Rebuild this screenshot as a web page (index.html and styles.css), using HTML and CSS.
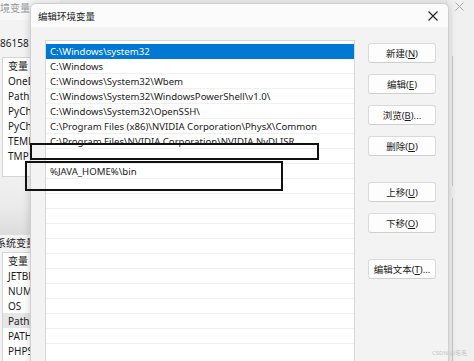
FILE: index.html
```html
<!DOCTYPE html>
<html lang="zh-CN">
<head>
  <meta charset="UTF-8">
  <title>编辑环境变量</title>
  <link rel="stylesheet" href="styles.css">
</head>
<body>
  <div class="desk">
    <!-- window behind the dialog -->
    <div class="bgwin">
      <div class="bg-title">环境变量</div>
      <div class="bg-user">86158 的用户变量</div>
      <div class="bg-list">
        <div class="bg-row head">变量</div>
        <div class="bg-row">OneDrive</div>
        <div class="bg-row">Path</div>
        <div class="bg-row">PyCharm</div>
        <div class="bg-row">PyCharm</div>
        <div class="bg-row">TEMP</div>
        <div class="bg-row">TMP</div>
      </div>
      <div class="bg-shade"></div>
      <div class="bg-sys">系统变量</div>
      <div class="bg-list bg-list-sys">
        <div class="bg-row head">变量</div>
        <div class="bg-row">JETBRAINS</div>
        <div class="bg-row">NUMBER</div>
        <div class="bg-row">OS</div>
        <div class="bg-row sel">Path</div>
        <div class="bg-row">PATHEXT</div>
        <div class="bg-row">PHPSTORM</div>
      </div>
    </div>

    <div class="bg-right">
      <svg class="bg-close" width="9" height="9" viewBox="0 0 9 9"><path d="M0.5 0.5L8.5 8.5M8.5 0.5L0.5 8.5" stroke="#a8a8a8" stroke-width="1"/></svg>
    </div>

    <!-- the dialog -->
    <div class="dialog">
      <div class="titlebar">
        <span class="title">编辑环境变量</span>
        <svg class="close" width="10" height="10" viewBox="0 0 10 10"><path d="M0.5 0.5L9.5 9.5M9.5 0.5L0.5 9.5" stroke="#222" stroke-width="1.1"/></svg>
      </div>
      <div class="dlg-body">
        <div class="paths">
          <div class="row sel">C:\Windows\system32</div>
          <div class="row">C:\Windows</div>
          <div class="row">C:\Windows\System32\Wbem</div>
          <div class="row">C:\Windows\System32\WindowsPowerShell\v1.0\</div>
          <div class="row">C:\Windows\System32\OpenSSH\</div>
          <div class="row">C:\Program Files (x86)\NVIDIA Corporation\PhysX\Common</div>
          <div class="row">C:\Program Files\NVIDIA Corporation\NVIDIA NvDLISR</div>
          <div class="row">.</div>
          <div class="row">%JAVA_HOME%\bin</div>
          <div class="row"></div>
          <div class="row"></div>
          <div class="row"></div>
          <div class="row"></div>
          <div class="row"></div>
          <div class="row"></div>
          <div class="row"></div>
          <div class="row"></div>
          <div class="row"></div>
          <div class="row"></div>
          <div class="row"></div>
        </div>
        <div class="buttons">
          <div class="group">
            <button class="btn">新建(<u>N</u>)</button>
            <button class="btn">编辑(<u>E</u>)</button>
            <button class="btn">浏览(<u>B</u>)...</button>
            <button class="btn">删除(<u>D</u>)</button>
          </div>
          <div class="group">
            <button class="btn">上移(<u>U</u>)</button>
            <button class="btn">下移(<u>O</u>)</button>
          </div>
          <div class="group">
            <button class="btn">编辑文本(<u>T</u>)...</button>
          </div>
        </div>
      </div>
    </div>

    <!-- annotation boxes drawn over the screenshot -->
    <div class="mark mark-dot"></div>
    <div class="mark mark-java"></div>

    <div class="watermark">CSDN @毛毛</div>
  </div>
</body>
</html>
```

FILE: styles.css
```css
body {
  margin: 0;
  font-family: "Noto Sans", "Noto Sans CJK SC", sans-serif;
  font-size: 10px;
  color: #1a1a1a;
}

.desk {
  position: relative;
  width: 474px;
  height: 361px;
  overflow: hidden;
  background: #f0f0f0;
}

/* background window */
.bgwin {
  width: 60px;
  height: 361px;
  background: #f3f3f3;
  overflow: hidden;
}

.bg-title {
  height: 20px;
  line-height: 16px;
  margin-left: -10px;
  color: #9a9a9a;
  font-size: 10px;
  white-space: nowrap;
  background: #f8f8f8;
}

.bg-user {
  margin-top: 15px;
  height: 20px;
  line-height: 16px;
  font-size: 10px;
  white-space: nowrap;
}

.bg-list {
  margin-left: 2px;
  margin-top: 2px;
  height: 118px;
  background: #fff;
  border: 1px solid #d4d4d4;
  border-right: none;
}

.bg-row {
  height: 15px;
  line-height: 16px;
  padding-left: 5px;
  white-space: nowrap;
  font-size: 10px;
}

.bg-row.head {
  line-height: 17px;
}

.bg-row.sel {
  background: #e6e6e6;
}

.bg-shade {
  height: 58px;
  background: linear-gradient(#f0f0f0, #ebebeb 50%, #dcdcdc);
}

.bg-sys {
  height: 15px;
  line-height: 16px;
  margin-left: -4px;
  white-space: nowrap;
  font-size: 10px;
}

.bg-list-sys {
  margin-top: 2px;
  height: 120px;
  border-bottom: none;
}

.bg-right {
  position: absolute;
  left: 446px;
  top: 0;
  width: 28px;
  height: 361px;
  background: #f0f0f0;
  border-left: 1px solid #e4e4e4;
}

.bg-right::before {
  content: "";
  position: absolute;
  left: 5px;
  top: 56px;
  height: 130px;
  border-left: 1px solid #c6c6c6;
}

.bg-right::after {
  content: "";
  position: absolute;
  left: 5px;
  top: 198px;
  height: 163px;
  border-left: 1px solid #c6c6c6;
}

.bg-close {
  position: absolute;
  left: 8px;
  top: 2px;
}

/* dialog */
.dialog {
  position: absolute;
  left: 30px;
  top: 3px;
  width: 417px;
  height: 370px;
  background: #f3f3f3;
  border: 1px solid #cfcfcf;
  border-radius: 6px 6px 0 0;
  box-shadow: 0 0 8px rgba(0, 0, 0, 0.18);
  overflow: hidden;
}

.titlebar {
  height: 23px;
  display: flex;
  align-items: center;
  justify-content: space-between;
  padding: 0 10px 0 7px;
  background: #fbfbfb;
}

.title {
  font-size: 9.5px;
  color: #1a1a1a;
}

.close {
  margin-top: 1px;
}

.dlg-body {
  display: flex;
  gap: 13px;
  padding: 13px 0 0 14px;
}

.paths {
  width: 308px;
  height: 340px;
  background: #fff;
  border: 1px solid #d6d6d6;
  border-bottom: none;
  padding-top: 3px;
  overflow: hidden;
  font-size: 9.6px;
}

.row {
  height: 14px;
  line-height: 16px;
  padding-left: 4px;
  border-bottom: 1px solid #f0f0f0;
  white-space: nowrap;
  overflow: hidden;
}

.row.sel {
  background: #0078d4;
  color: #fff;
  border-bottom-color: #0078d4;
}

.buttons {
  display: flex;
  flex-direction: column;
  gap: 26px;
  padding-top: 3px;
}

.group {
  display: flex;
  flex-direction: column;
  gap: 11px;
}

.btn {
  width: 68px;
  height: 20px;
  padding: 0;
  font-family: "Noto Sans", "Noto Sans CJK SC", sans-serif;
  font-size: 9.5px;
  color: #1a1a1a;
  background: #fdfdfd;
  border: 1px solid #dadada;
  border-bottom-color: #cfcfcf;
  border-radius: 3px;
}

.btn u {
  text-underline-offset: 1px;
}

/* annotation rectangles */
.mark {
  position: absolute;
  border: 2px solid #111;
}

.mark-dot {
  left: 30px;
  top: 143px;
  width: 285px;
  height: 13px;
}

.mark-java {
  left: 25px;
  top: 161px;
  width: 254px;
  height: 26px;
}

.watermark {
  position: absolute;
  left: 432px;
  top: 348px;
  font-size: 6px;
  color: #c4c4c4;
  white-space: nowrap;
}
```
